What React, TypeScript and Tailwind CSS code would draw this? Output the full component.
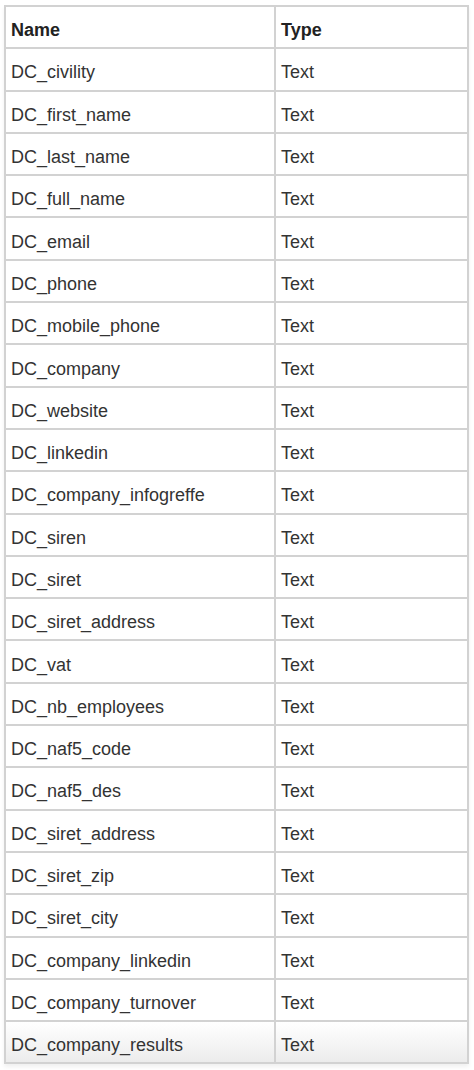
import React from "react";

const names = [
  "DC_civility",
  "DC_first_name",
  "DC_last_name",
  "DC_full_name",
  "DC_email",
  "DC_phone",
  "DC_mobile_phone",
  "DC_company",
  "DC_website",
  "DC_linkedin",
  "DC_company_infogreffe",
  "DC_siren",
  "DC_siret",
  "DC_siret_address",
  "DC_vat",
  "DC_nb_employees",
  "DC_naf5_code",
  "DC_naf5_des",
  "DC_siret_address",
  "DC_siret_zip",
  "DC_siret_city",
  "DC_company_linkedin",
  "DC_company_turnover",
  "DC_company_results",
];

export default function App() {
  return (
    <div
      className="w-[474px] h-[1070px] bg-white pt-[5px] pl-[4px]"
      style={{ fontFamily: '"Liberation Sans", Arial, sans-serif' }}
    >
      <div className="w-[465px] border-2 border-[#d2d2d2] shadow-[0_3px_4px_rgba(0,0,0,0.06)]">
        <div className="grid grid-cols-[268px_1fr] h-[40.3px] text-[18px] font-bold text-[#222]">
          <div className="flex items-center pl-[5px] pt-[7px]">Name</div>
          <div className="flex items-center pl-[5px] pt-[7px] border-l-2 border-[#d2d2d2]">Type</div>
        </div>
        {names.map((n, i) => (
          <div
            key={i}
            className={
              i === names.length - 1
                ? "grid grid-cols-[268px_1fr] h-[42.3px] border-t-2 border-[#d2d2d2] text-[18px] text-[#333] bg-gradient-to-b from-white to-[#ececec]"
                : "grid grid-cols-[268px_1fr] h-[42.3px] border-t-2 border-[#d2d2d2] text-[18px] text-[#333]"
            }
          >
            <div className="flex items-center pl-[5px] pt-[7px]">{n}</div>
            <div className="flex items-center pl-[5px] pt-[7px] border-l-2 border-[#d2d2d2]">Text</div>
          </div>
        ))}
      </div>
    </div>
  );
}
